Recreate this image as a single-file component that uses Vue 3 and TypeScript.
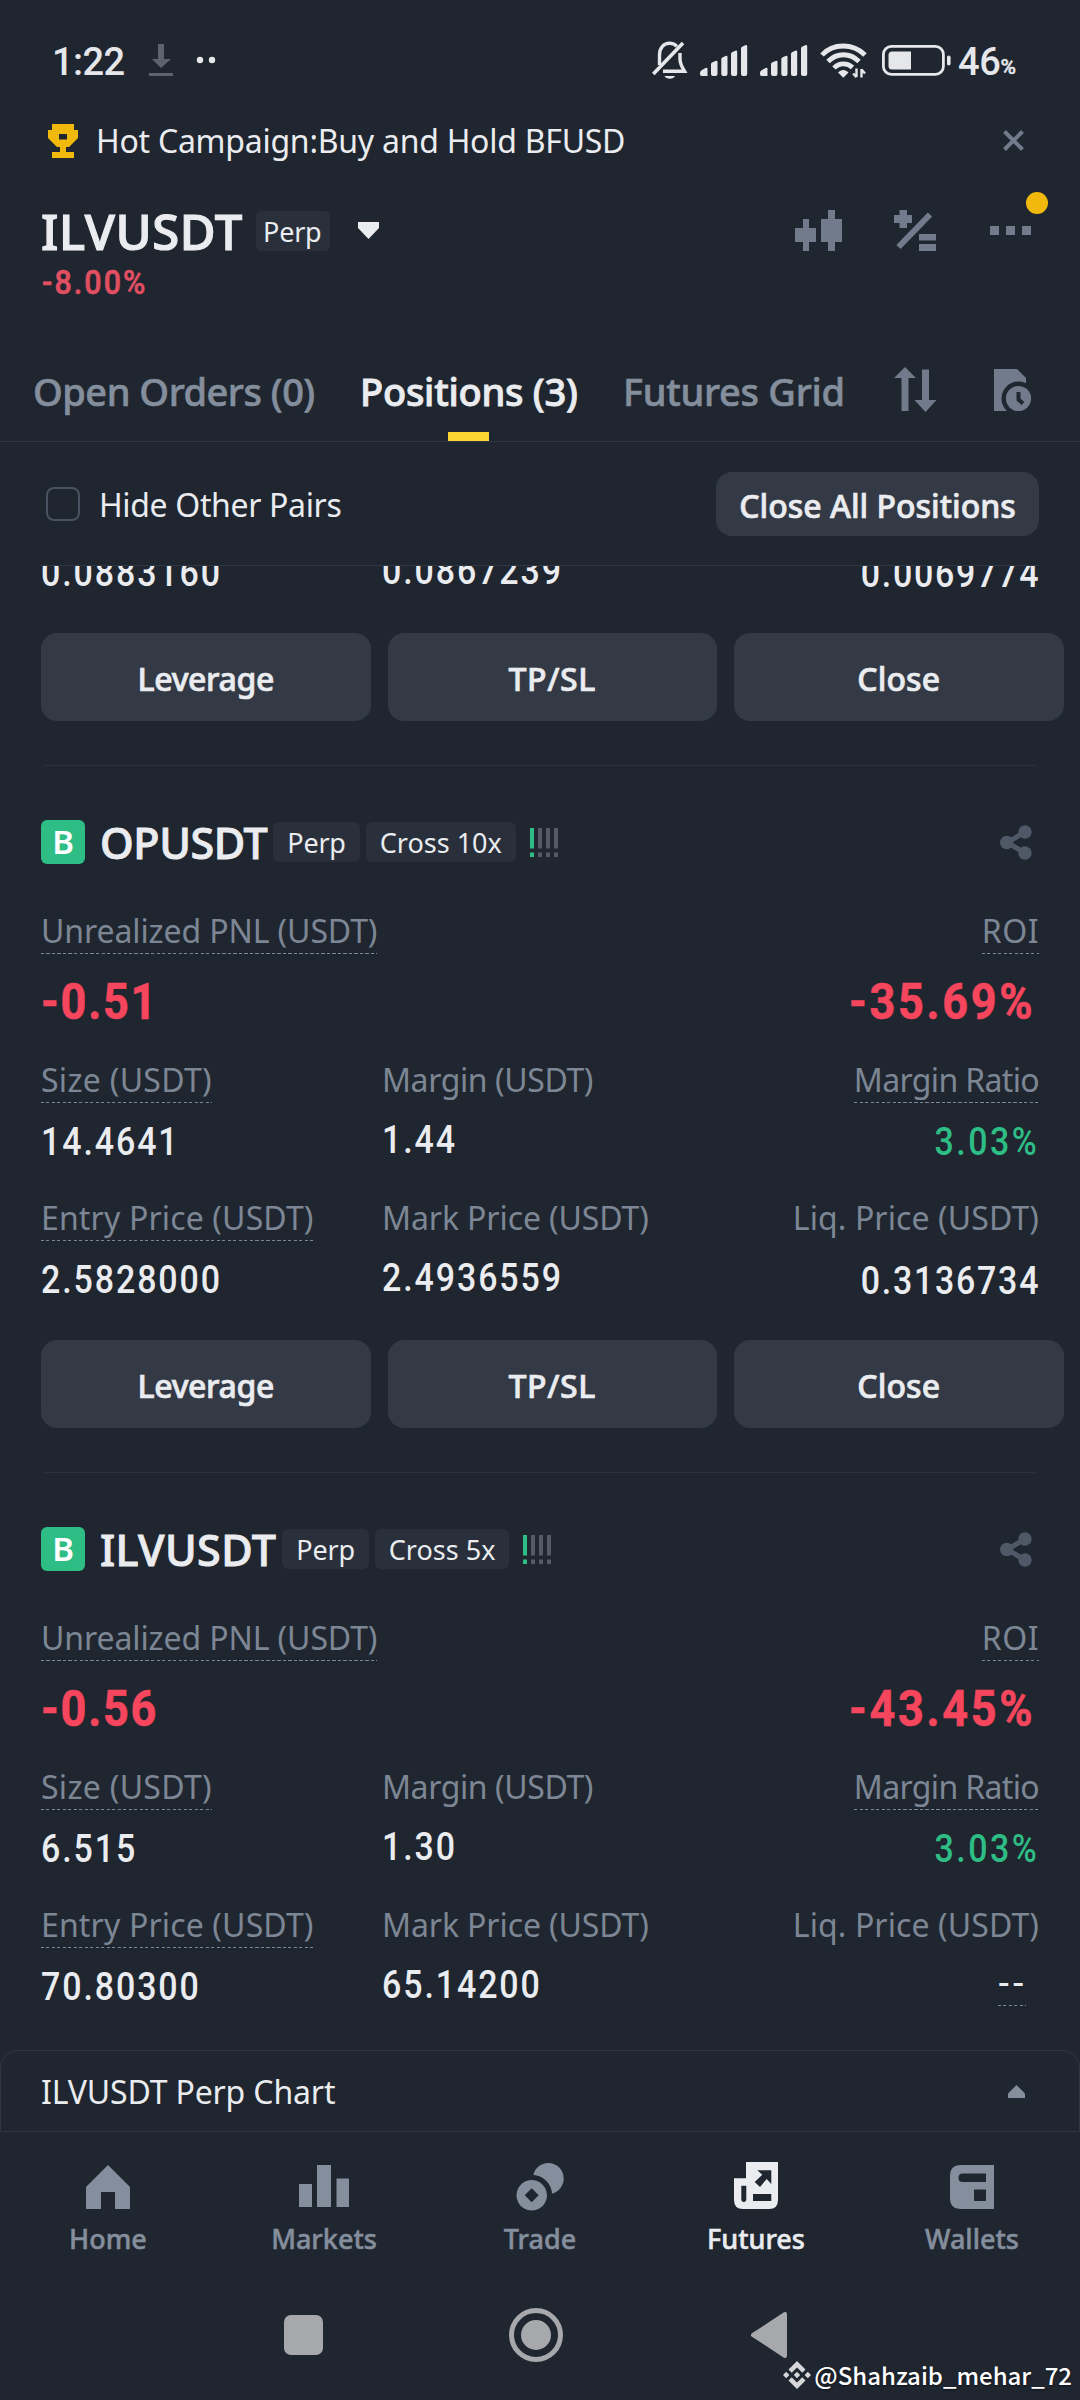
<script setup lang="ts">
interface Metric {
  label: string
  value: string
  hint?: boolean
  tone?: 'up'
  ls: number
}

interface Position {
  symbol: string
  ls: number
  leverage: string
  pnl: string
  roi: string
  stats: Metric[]
  prices: Metric[]
}

const actions = [
  { label: 'Leverage', ls: -0.4 },
  { label: 'TP/SL', ls: 0.6 },
  { label: 'Close', ls: 0.1 },
]

const closedOff = ['0.0883160', '0.0867239', '0.0069774']

function build(symbol: string, ls: number, leverage: string, pnl: string, roi: string, v: string[]): Position {
  return {
    symbol,
    ls,
    leverage,
    pnl,
    roi,
    stats: [
      { label: 'Size (USDT)', value: v[0], hint: true, ls: 0.3 },
      { label: 'Margin (USDT)', value: v[1], ls: -0.4 },
      { label: 'Margin Ratio', value: v[2], hint: true, tone: 'up', ls: -0.65 },
    ],
    prices: [
      { label: 'Entry Price (USDT)', value: v[3], hint: true, ls: 0.15 },
      { label: 'Mark Price (USDT)', value: v[4], ls: -0.1 },
      { label: 'Liq. Price (USDT)', value: v[5], ls: 0.1 },
    ],
  }
}

const positions: Position[] = [
  build('OPUSDT', -0.4, 'Cross 10x', '-0.51', '-35.69%', ['14.4641', '1.44', '3.03%', '2.5828000', '2.4936559', '0.3136734']),
  build('ILVUSDT', 0.4, 'Cross 5x', '-0.56', '-43.45%', ['6.515', '1.30', '3.03%', '70.80300', '65.14200', '--']),
]

const signals = [0, 1]
</script>

<template>
  <div class="phone">
    <header class="status">
      <span class="clock">1:22</span>
      <svg class="dl" width="24" height="32" viewBox="0 0 24 32"><path d="M9 0h6v15h7l-10 9-9-9h6z" fill="#5d636c" /><path d="M0 29h24v3H0z" fill="#5d636c" /></svg>
      <svg class="pips" width="20" height="8" viewBox="0 0 20 8"><circle cx="4" cy="4" r="3.2" /><circle cx="16" cy="4" r="3.2" /></svg>
      <svg class="bell" width="36" height="40" viewBox="0 0 36 40" fill="none" stroke="#e6e7ea" stroke-width="3.4">
        <path d="M7.5 24V14C7.5 6.500 12 2.300 17.500 2.300c3 0 5.500 1 7.300 3" />
        <path d="M28 12v6c0 5 2 8 4.500 12.200H11" />
        <path d="M1.300 33L31 2" stroke-width="3.6" />
        <path d="M12.500 35h10.500c-1.500 3.500-9 3.500-10.500 0z" fill="#e6e7ea" stroke="none" />
      </svg>
      <svg v-for="s in signals" :key="s" class="signal" width="48" height="31" viewBox="0 0 48 31">
        <path d="M0 28q0-2 2-3l3.500-2q2-.8 2 1V31H1.500Q0 31 0 29zM11 19q0-1 1-1.500l3.500-1.500q2-.6 2 1V29q0 2-2 2h-2.500q-2 0-2-2zM21.300 14q0-1 1-1.500l3.200-1.500q2-.6 2 1V29q0 2-2 2h-2.200q-2 0-2-2zM31 9q0-1 1-1.700l3.200-1.600q2-.6 2 1V29q0 2-2 2H33q-2 0-2-2zM41 3.500q0-1 1-1.700l3.200-1.600q2-.6 2 1V29q0 2-2 2H43q-2 0-2-2z" />
      </svg>
      <svg class="wifi" width="48" height="36" viewBox="0 0 48 36" fill="none" stroke="#e6e7ea" stroke-width="4.800">
        <path d="M2 12C13 0 33 0 45 12" />
        <path d="M8 18.500c9-9 22-9 31 0" />
        <path d="M14 25c5-5.500 13.500-5.500 18.500-.5" />
        <path d="M18 29.500c3-3.500 7.500-3.500 10.500 0l-5.200 5.200z" fill="#e6e7ea" stroke="none" />
        <path d="M36.500 25.500v8.500M33.200 30.500l3.300 3.800M41.500 34.500V26M41.500 26.500l3.500 4" stroke-width="2.400" />
      </svg>
      <svg class="battery" width="70" height="31" viewBox="0 0 70 31">
        <rect x="1.400" y="1.400" width="60" height="28" rx="8" fill="none" stroke="#e6e7ea" stroke-width="2.800" />
        <path d="M10 6.500h19v18H10q-3.500 0-3.500-3.500V10q0-3.500 3.500-3.500z" />
        <rect x="65" y="10.500" width="3.600" height="10" rx="1.800" />
      </svg>
      <span class="level">46</span><span class="pct">%</span>
    </header>

    <div class="banner">
      <svg width="30" height="34" viewBox="0 0 30 34"><path fill="#f0b90b" fill-rule="evenodd" d="M4 0h22v6h4v8l-9 9h-3v5h8v6H4v-6h8v-5H9l-9-9V6h4zM11 10v5.500h8V10z" /></svg>
      <span class="banner-text">Hot Campaign:Buy and Hold BFUSD</span>
      <svg class="close" width="21" height="21" viewBox="0 0 21 21"><path d="M1.500 1.500l18 18M19.500 1.500l-18 18" stroke="#727b8c" stroke-width="4" /></svg>
    </div>

    <div class="pair">
      <h1>ILVUSDT</h1>
      <span class="badge small">Perp</span>
      <svg class="caret" width="21" height="17" viewBox="0 0 21 17"><path d="M0 0h21v6L10.500 17 0 6z" fill="#eaecef" /></svg>
      <div class="tools">
        <svg width="47" height="41" viewBox="0 0 47 41"><path d="M8 9h6v9h7v14h-7v9H8v-9H0V18h8zM33 0h7v9h7v23h-7v9h-7v-9h-7V9h7z" /></svg>
        <svg width="43" height="41" viewBox="0 0 43 41"><path d="M5.500 0h7.500v5h5v8h-5v5H5.500v-5H0V5h5.500zM25 24h17v6.500H25zM25 34h17v7H25z" /><path d="M4.500 37L36 4.500" stroke="#727b8c" stroke-width="6" /></svg>
        <span class="more">
          <svg width="41" height="9" viewBox="0 0 41 9"><path d="M0 0h9v9H0zM16 0h9v9h-9zM32 0h9v9h-9z" /></svg>
          <i class="alert"></i>
        </span>
      </div>
    </div>
    <div class="change"><span class="din">-8.00%</span></div>

    <nav class="tabs">
      <span class="tab orders">Open Orders (0)</span>
      <span class="tab active">Positions (3)</span>
      <span class="tab grid">Futures Grid</span>
      <svg class="sort" width="43" height="45" viewBox="0 0 43 45"><path d="M11 0l11 11h-7.500v33h-7V11H0zM28 2.500h7V33h7.500L31.500 45l-11-12H28z" /></svg>
      <svg class="history" width="40" height="44" viewBox="0 0 40 44"><path d="M0 0h23l9 9v33H0z" /><circle cx="24.500" cy="29.500" r="17" fill="#1f2630" /><circle cx="24.500" cy="29.500" r="12.600" /><path d="M24.500 23v7.500l4.500 4" fill="none" stroke="#1f2630" stroke-width="4" /></svg>
    </nav>

    <div class="filter">
      <i class="check"></i>
      <span class="hide">Hide Other Pairs</span>
      <button class="close-all">Close All Positions</button>
    </div>

    <main class="list">
      <section class="card tail">
        <div class="cols values">
          <span v-for="v in closedOff" :key="v"><b class="num din">{{ v }}</b></span>
        </div>
        <div class="actions">
          <button v-for="a in actions" :key="a.label" :style="{ letterSpacing: a.ls + 'px' }">{{ a.label }}</button>
        </div>
      </section>

      <section v-for="(p, i) in positions" :key="p.symbol" class="card">
        <div class="head">
          <span class="side">B</span>
          <h2 :style="{ letterSpacing: p.ls + 'px' }">{{ p.symbol }}</h2>
          <span class="badge">Perp</span>
          <span class="badge lev">{{ p.leverage }}</span>
          <svg class="risk" width="28" height="29" viewBox="0 0 28 29"><path d="M0 0h4v20.500H0zM0 24.500h4V29H0z" fill="#2ebd85" /><path d="M8 0h4v20.500H8zM8 24.500h4V29H8zM16 0h4v20.500h-4zM16 24.500h4V29h-4zM24 0h4v20.500h-4zM24 24.500h4V29h-4z" fill="#545a66" /></svg>
          <svg class="share" width="32" height="35" viewBox="0 0 32 35"><path d="M25 7L7 17.500 25 28" fill="none" stroke="#4f5867" stroke-width="5" /><g fill="#4f5867"><circle cx="25" cy="7" r="6.700" /><circle cx="6.700" cy="17.500" r="6.700" /><circle cx="25" cy="28" r="6.700" /></g></svg>
        </div>

        <div class="split labels first">
          <span class="label hint">Unrealized PNL (USDT)</span>
          <span class="label hint roi">ROI</span>
        </div>
        <div class="split totals">
          <b class="din">{{ p.pnl }}</b>
          <b class="din">{{ p.roi }}</b>
        </div>

        <template v-for="(group, g) in [p.stats, p.prices]" :key="g">
          <div class="cols labels" :class="g ? 'third' : 'second'">
            <span v-for="m in group" :key="m.label">
              <span class="label" :class="{ hint: m.hint }" :style="{ letterSpacing: m.ls + 'px' }">{{ m.label }}</span>
            </span>
          </div>
          <div class="cols values" :class="{ prices: g }">
            <span v-for="m in group" :key="m.label">
              <b v-if="m.value === '--'" class="none hint">--</b>
              <b v-else class="num din" :class="m.tone">{{ m.value }}</b>
            </span>
          </div>
        </template>

        <div v-if="i === 0" class="actions">
          <button v-for="a in actions" :key="a.label" :style="{ letterSpacing: a.ls + 'px' }">{{ a.label }}</button>
        </div>
      </section>
    </main>

    <div class="chart">
      <span>ILVUSDT Perp Chart</span>
      <svg width="17" height="13" viewBox="0 0 17 13"><path d="M0 13V8.500L8.500 0 17 8.500V13z" fill="#848e9c" /></svg>
    </div>

    <nav class="bottom">
      <div class="item">
        <svg viewBox="0 0 48 48"><path d="M24 2l22 22v22H31V29H17v17H2V24z" /></svg>
        <span>Home</span>
      </div>
      <div class="item">
        <svg class="wide" viewBox="0 0 52 48"><path d="M1 21h13v23H1zM19 2h14v42H19zM38.500 15.500H51V44H38.500z" /></svg>
        <span>Markets</span>
      </div>
      <div class="item">
        <svg viewBox="0 0 48 48"><circle cx="32.300" cy="15.500" r="15.400" /><circle cx="15.700" cy="32.300" r="20.500" fill="#1f2630" /><path fill-rule="evenodd" d="M15.700 17a15.300 15.300 0 1 0 .01 0zM15.700 25.300l7 7-7 7-7-7z" /></svg>
        <span>Trade</span>
      </div>
      <div class="item on">
        <svg viewBox="0 0 48 48"><path fill-rule="evenodd" d="M2 15.300h12V-1h32v38q0 9-9 9H11q-9 0-9-9zM9.300 22.700V36q0 3 2.500 3t2.500-3V22.700zM21 31v7h18.300v-7zM25.300 7.300l5 4.400L22.700 19l5.300 5 6.700-8 4.600 5V7.300z" /></svg>
        <span>Futures</span>
      </div>
      <div class="item">
        <svg viewBox="0 0 48 48"><path fill-rule="evenodd" d="M13 2h33v44H13Q2 46 2 35V13Q2 2 13 2zM14.500 10.500q-4 0-4 4.300t4 4.300H38v-8.600zM26 26.500V38h12V26.500z" /></svg>
        <span>Wallets</span>
      </div>
    </nav>

    <footer class="system">
      <i class="recent"></i>
      <svg class="home" width="54" height="54" viewBox="0 0 54 54"><circle cx="27" cy="27" r="24.500" fill="none" stroke="#a7a8ac" stroke-width="5" /><circle cx="27" cy="27" r="15" fill="#a7a8ac" /></svg>
      <svg class="back" width="38" height="46" viewBox="0 0 38 46"><path d="M3 23L35 2v42z" fill="#a7a8ac" stroke="#a7a8ac" stroke-width="4" stroke-linejoin="round" /></svg>
    </footer>

    <div class="handle">
      <svg width="28" height="28" viewBox="0 0 28 28" fill="#d6d7d9"><path d="M14 0l8.500 8.500-3.200 3.200L14 6.400l-5.300 5.300-3.200-3.200zM14 28l8.500-8.500-3.200-3.200-5.300 5.300-5.300-5.300-3.200 3.200zM14 10.800l3.200 3.200-3.200 3.200-3.200-3.200zM3.200 10.800L6.400 14l-3.200 3.200L0 14zM24.800 10.800L28 14l-3.200 3.200-3.200-3.200z" /></svg>
      <span>@Shahzaib_mehar_72</span>
    </div>
  </div>
</template>

<style>
body {
  background: #1f2630;
}
</style>

<style scoped>
.phone {
  position: relative;
  width: 1080px;
  height: 2400px;
  overflow: hidden;
  background: #1f2630;
  color: #eaecef;
  font-family: "Noto Sans", "Liberation Sans", sans-serif;
  font-size: 32px;
}
.phone *, .phone { box-sizing: border-box; }
svg { display: block; flex: none; }
span { white-space: nowrap; }
button {
  border: 0;
  padding: 2px 0 0;
  font: 500 32px "Noto Sans", sans-serif;
  -webkit-text-stroke: 0.7px currentColor;
  color: #eaecef;
  background: #333a46;
}
.din {
  display: inline-block;
  font-family: Roboto, sans-serif;
  transform: scaleX(0.87);
  transform-origin: left center;
}

.status {
  display: flex;
  align-items: center;
  height: 120px;
  padding: 0 60px 0 52px;
  font-family: Roboto, sans-serif;
  font-weight: 500;
  color: #e6e7ea;
  fill: #e6e7ea;
}
.clock { width: 97px; font-size: 38px; line-height: 44px; padding-top: 4px; letter-spacing: -0.6px; }
.pips { margin-left: 23px; }
.bell { margin-left: 436px; margin-top: 2px; }
.signal { margin-left: 12px; margin-top: 1px; }
.wifi { margin-left: 12px; margin-top: 1px; }
.battery { margin-left: 14px; }
.level { font-size: 38px; line-height: 44px; padding-top: 4px; margin-left: 6px; letter-spacing: -0.4px; }
.pct { font-size: 21px; line-height: 24px; padding-top: 14px; -webkit-text-stroke: 0.5px currentColor; }

.banner {
  display: flex;
  align-items: center;
  height: 41px;
  padding: 0 56px 0 48px;
}
.banner-text { margin-left: 18px; letter-spacing: -0.25px; }
.close { margin-left: auto; }

.pair {
  display: flex;
  align-items: center;
  height: 61px;
  margin-top: 39px;
  padding: 0 50px 0 41px;
}
h1 { margin: 0; width: 215px; font-size: 49px; font-weight: 500; line-height: 60px; letter-spacing: 0.6px; -webkit-text-stroke: 1.2px currentColor; }
.badge {
  height: 40px;
  padding: 0 14px;
  border-radius: 6px;
  background: #29303c;
  font-size: 27px;
  line-height: 41px;
  letter-spacing: -0.2px;
}
.badge.small { width: 74px; padding: 0 0 0 7px; }
.caret { margin-left: 28px; }
.tools {
  display: flex;
  align-items: center;
  margin-left: auto;
  gap: 53px;
  fill: #727b8c;
}
.tools svg:first-child { margin-right: -1px; }
.more { position: relative; }
.alert {
  position: absolute;
  right: -18px;
  top: -34px;
  width: 22px;
  height: 22px;
  border-radius: 50%;
  background: #f0b90b;
}
.change { height: 40px; padding-left: 42px; color: #e04f62; font-size: 33px; font-weight: 500; line-height: 40px; margin-top: 1px; }
.change .din { transform: scaleX(0.92); letter-spacing: 2.3px; -webkit-text-stroke: 0.6px currentColor; }

.tabs {
  display: flex;
  align-items: center;
  height: 101px;
  margin-top: 39px;
  border-bottom: 1px solid #303743;
  font-size: 38px;
  font-weight: 500;
  color: #848e9c;
  fill: #727b8c;
  padding-left: 33px;
}
.tab { position: relative; line-height: 100px; height: 100px; -webkit-text-stroke: 0.6px currentColor; }
.orders { width: 327px; letter-spacing: -0.5px; }
.active { width: 219px; color: #eaecef; letter-spacing: -0.25px; -webkit-text-stroke-width: 0.9px; }
.active::after {
  content: "";
  position: absolute;
  left: 88px;
  bottom: 0;
  width: 41px;
  height: 9px;
  background: #fcd535;
}
.grid { margin-left: 44px; width: 271px; letter-spacing: -0.3px; }
.sort { margin-top: -4px; }
.history { margin-left: 57px; margin-top: -1px; }

.filter {
  display: flex;
  align-items: center;
  height: 124px;
  margin: 0 41px;
  border-bottom: 1px solid #303743;
}
.check { width: 34px; height: 34px; margin-left: 5px; border: 2.5px solid #4a5160; border-radius: 8px; }
.hide { margin-left: 19px; letter-spacing: -0.35px; padding-top: 2px; }
.close-all { margin-left: auto; width: 323px; height: 64px; border-radius: 16px; padding-top: 3px; }

.list { height: 1484px; overflow: hidden; }
.card {
  position: relative;
  height: 707px;
  padding: 54px 0 0 41px;
}
.card::after {
  content: "";
  position: absolute;
  left: 44px;
  right: 44px;
  bottom: 0;
  height: 1px;
  background: #2b323d;
}
.tail { height: 218px; padding-top: 0; margin-top: -18px; }
.head { display: flex; align-items: center; height: 44px; margin-right: 48px; }
.side {
  width: 44px;
  height: 44px;
  border-radius: 6px;
  background: #2ebd85;
  color: #fff;
  font-size: 33px;
  font-weight: 600;
  line-height: 43px;
  text-align: center;
}
h2 { margin: 0 6px 0 15px; padding-top: 2px; font-size: 43px; font-weight: 500; line-height: 44px; -webkit-text-stroke: 0.9px currentColor; }
.lev { margin-left: 6px; letter-spacing: 0; }
.risk { margin-left: 14px; }
.share { margin-left: auto; }

.split { display: flex; justify-content: space-between; margin-right: 41px; }
.cols { display: grid; grid-template-columns: 341px 341px 316px; }
.cols > :last-child { text-align: right; }
.labels { height: 43px; line-height: 39px; color: #7d8694; }
.first { margin-top: 47px; }
.second { margin-top: 28px; }
.third { margin-top: 35px; }
.label { display: inline-block; height: 43px; letter-spacing: -0.1px; }
.roi { letter-spacing: 0.5px; }
.hint {
  background: repeating-linear-gradient(90deg, #7d8694 0 3px, transparent 3px 5.5px) left bottom / 100% 1.5px no-repeat;
}
.totals { height: 60px; margin-top: 18px; line-height: 60px; font-size: 50px; color: #f6465d; }
.totals .din { transform: scaleX(0.9); letter-spacing: 2px; -webkit-text-stroke: 0.6px currentColor; }
.totals .din:last-child { transform-origin: right center; letter-spacing: 3px; padding-right: 4px; }
.values { height: 46px; margin-top: 14px; line-height: 46px; font-size: 39px; }
.tail .values { margin-top: 0; }
.num { font-weight: 500; letter-spacing: 2.2px; }
.values > :nth-child(2) { margin-top: -2px; }
.prices > :last-child, .tail .values > :last-child { margin-top: 1px; }
.values > :last-child .num { transform-origin: right center; letter-spacing: 2px; margin-right: -1px; }
.values > :last-child .up { color: #2ebd85; letter-spacing: 2.8px; margin-right: 0; }
.none { display: inline-block; vertical-align: top; width: 28px; height: 43px; margin-right: 13px; font: 500 34px/40px Roboto, sans-serif; letter-spacing: 3px; text-align: left; }

.actions { display: flex; gap: 17px; margin-top: 39px; }
.actions button { width: 329.5px; height: 88px; border-radius: 16px; }

.chart {
  display: flex;
  align-items: center;
  justify-content: space-between;
  height: 82px;
  padding: 0 54px 0 40px;
  border: 1px solid #303743;
  border-radius: 18px 18px 0 0;
}
.chart span { letter-spacing: -0.15px; }

.bottom { display: flex; height: 138px; }
.item { display: flex; flex: 1; flex-direction: column; align-items: center; padding-top: 31px; color: #848e9c; fill: #848e9c; font-size: 27px; font-weight: 500; }
.item svg { width: 48px; height: 48px; overflow: visible; }
.item svg.wide { width: 52px; }
.item span { margin-top: 10px; line-height: 36px; -webkit-text-stroke: 0.5px currentColor; }
.item.on { color: #eaecef; fill: #eaecef; }

.system { display: flex; align-items: center; height: 130px; padding-left: 284px; }
.recent { width: 39px; height: 40px; border-radius: 7px; background: #a7a8ac; }
.home { margin-left: 186px; }
.back { margin-left: 187px; }

.handle {
  position: absolute;
  right: 8px;
  top: 2359px;
  display: flex;
  align-items: center;
  gap: 3px;
  font: 500 24px/32px "Noto Sans CJK SC", sans-serif;
  color: #fff;
  text-shadow: 0 1px 2px #0008;
}
</style>
